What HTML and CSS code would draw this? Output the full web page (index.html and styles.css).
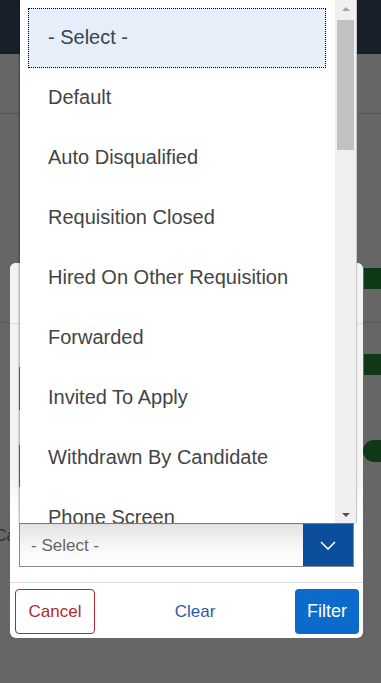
FILE: index.html
```html
<!DOCTYPE html>
<html>
<head>
<meta charset="utf-8">
<link rel="stylesheet" href="styles.css">
</head>
<body>
<div class="page">
  <div class="header"></div>
  <div class="row row-top"></div>
  <div class="row gap-154"></div>
  <div class="row h21"><span class="green-bar"></span></div>
  <div class="row h33 line-b"></div>
  <div class="row h31"></div>
  <div class="row h21"><span class="green-bar"></span></div>
  <div class="row h65"></div>
  <div class="row h22"><span class="green-dot"></span></div>
  <div class="row h63"></div>
  <div class="row text-row">Ca</div>
</div>

<div class="modal">
  <div class="modal-head"></div>
  <div class="modal-body">
    <div class="group"><div class="label"></div><div class="input i43"></div></div>
    <div class="group"><div class="label"></div><div class="input i42"></div></div>
    <div class="group"><div class="label l36"></div>
      <div class="select">
        <span class="select-text">- Select -</span>
        <span class="select-btn">
          <svg width="16" height="9" viewBox="0 0 16 9"><path d="M1 1 L8 8 L15 1" fill="none" stroke="#fff" stroke-width="1.6"/></svg>
        </span>
      </div>
    </div>
  </div>
  <div class="modal-foot">
    <button class="btn-cancel">Cancel</button>
    <span class="btn-clear">Clear</span>
    <button class="btn-filter">Filter</button>
  </div>
</div>

<div class="dropdown">
  <ul class="options">
    <li class="opt selected">- Select -</li>
    <li class="opt">Default</li>
    <li class="opt">Auto Disqualified</li>
    <li class="opt">Requisition Closed</li>
    <li class="opt">Hired On Other Requisition</li>
    <li class="opt">Forwarded</li>
    <li class="opt">Invited To Apply</li>
    <li class="opt">Withdrawn By Candidate</li>
    <li class="opt">Phone Screen</li>
  </ul>
  <div class="scrollbar">
    <div class="sb-btn"><span class="tri-up"></span></div>
    <div class="thumb"></div>
    <div class="sb-space"></div>
    <div class="sb-btn"><span class="tri-down"></span></div>
  </div>
</div>
</body>
</html>
```
FILE: styles.css
```css
html, body {
  margin: 0;
  padding: 0;
}
body {
  width: 381px;
  height: 683px;
  overflow: hidden;
  background: #666666;
  font-family: "Liberation Sans", Arial, sans-serif;
  position: relative;
}
.page {
  display: flex;
  flex-direction: column;
}
.header {
  height: 54px;
  background: #17202a;
}
.row {
  display: flex;
  align-items: center;
  justify-content: flex-end;
}
.row-top {
  height: 59px;
  border-bottom: 1px solid #575757;
}
.gap-154 { height: 154px; }
.h21 { height: 21px; }
.h22 { height: 22px; }
.h31 { height: 31px; }
.h33 { height: 33px; }
.h63 { height: 63px; }
.h65 { height: 65px; }
.line-b { border-bottom: 1px solid #5a5a5a; height: 33px; }
.green-bar {
  width: 17px;
  height: 21px;
  background: #0f3816;
}
.green-dot {
  width: 28px;
  height: 22px;
  border-radius: 11px;
  background: #0f3816;
  margin-right: -10px;
}
.text-row {
  height: 21px;
  justify-content: flex-start;
  font-size: 16px;
  color: #2f2f2f;
  margin-left: -5px;
}

.modal {
  position: absolute;
  left: 10px;
  top: 263px;
  width: 353px;
  height: 375px;
  background: #fff;
  border-radius: 6px;
  display: flex;
  flex-direction: column;
  box-sizing: border-box;
  overflow: hidden;
}
.modal-head {
  height: 60px;
  border-bottom: 1px solid #dcdcdc;
  background: #f3f3f3;
}
.modal-body {
  padding: 8px 9px 15px;
  display: flex;
  flex-direction: column;
  background: linear-gradient(#f3f3f3, #f3f3f3 150px, #fff 190px);
}
.group {
  display: flex;
  flex-direction: column;
}
.label { height: 35px; }
.label.l36 { height: 36px; }
.input {
  border: 1px solid #6e6e6e;
  background: #fff;
  box-sizing: border-box;
}
.i43 { height: 43px; }
.i42 { height: 42px; }
.select {
  height: 44px;
  box-sizing: border-box;
  border: 1px solid #8a8a8a;
  display: flex;
  background: linear-gradient(to bottom, #e3e3e3, #f7f7f7 55%, #fff);
}
.select-text {
  flex: 1;
  display: flex;
  align-items: center;
  padding-left: 11px;
  padding-top: 2px;
  font-size: 17px;
  color: #666;
}
.select-btn {
  width: 50px;
  background: #0b4f9c;
  display: flex;
  align-items: center;
  justify-content: center;
}
.modal-foot {
  border-top: 1px solid #dddddd;
  padding: 6px 4px 4px 5px;
  display: flex;
  align-items: stretch;
  height: 45px;
}
.btn-cancel {
  width: 80px;
  height: 45px;
  border: 1px solid #b3282d;
  border-radius: 4px;
  background: #fff;
  color: #b3282d;
  font-family: "Liberation Sans", Arial, sans-serif;
  font-size: 17px;
  padding: 0;
}
.btn-clear {
  flex: 1;
  display: flex;
  align-items: center;
  justify-content: center;
  color: #2d5c9e;
  font-size: 17px;
}
.btn-filter {
  width: 64px;
  height: 45px;
  border: none;
  border-radius: 4px;
  background: #0b6bcb;
  color: #fff;
  font-family: "Liberation Sans", Arial, sans-serif;
  font-size: 18px;
  padding: 0;
}

.dropdown {
  position: absolute;
  left: 20px;
  top: 0;
  width: 337px;
  height: 523px;
  background: #fff;
  display: flex;
  box-shadow: -1px 0 2px rgba(0,0,0,0.35);
  border-right: 1px solid #c8c8c8;
  box-sizing: border-box;
}
.options {
  list-style: none;
  margin: 0;
  padding: 8px 0 0;
  width: 315px;
  height: 523px;
  overflow: hidden;
  box-sizing: border-box;
}
.opt {
  height: 60px;
  margin: 0 9px 0 8px;
  box-sizing: border-box;
  border: 1px solid transparent;
  padding-left: 19px;
  padding-bottom: 2px;
  display: flex;
  align-items: center;
  font-size: 20px;
  color: #444;
}
.opt.selected {
  background: #e5eef9;
  border: 1px dotted #000;
  color: #3c4250;
}
.scrollbar {
  width: 21px;
  background: #f0f0f0;
  display: flex;
  flex-direction: column;
  align-items: center;
}
.sb-btn {
  height: 17px;
  width: 21px;
  display: flex;
  align-items: center;
  justify-content: center;
}
.tri-up {
  width: 0;
  height: 0;
  border-left: 4px solid transparent;
  border-right: 4px solid transparent;
  border-bottom: 4px solid #a3a3a3;
}
.tri-down {
  width: 0;
  height: 0;
  border-left: 4px solid transparent;
  border-right: 4px solid transparent;
  border-top: 4px solid #505050;
}
.thumb {
  width: 17px;
  height: 130px;
  margin-top: 3px;
  background: #c1c1c1;
}
.sb-space { flex: 1; }
```
